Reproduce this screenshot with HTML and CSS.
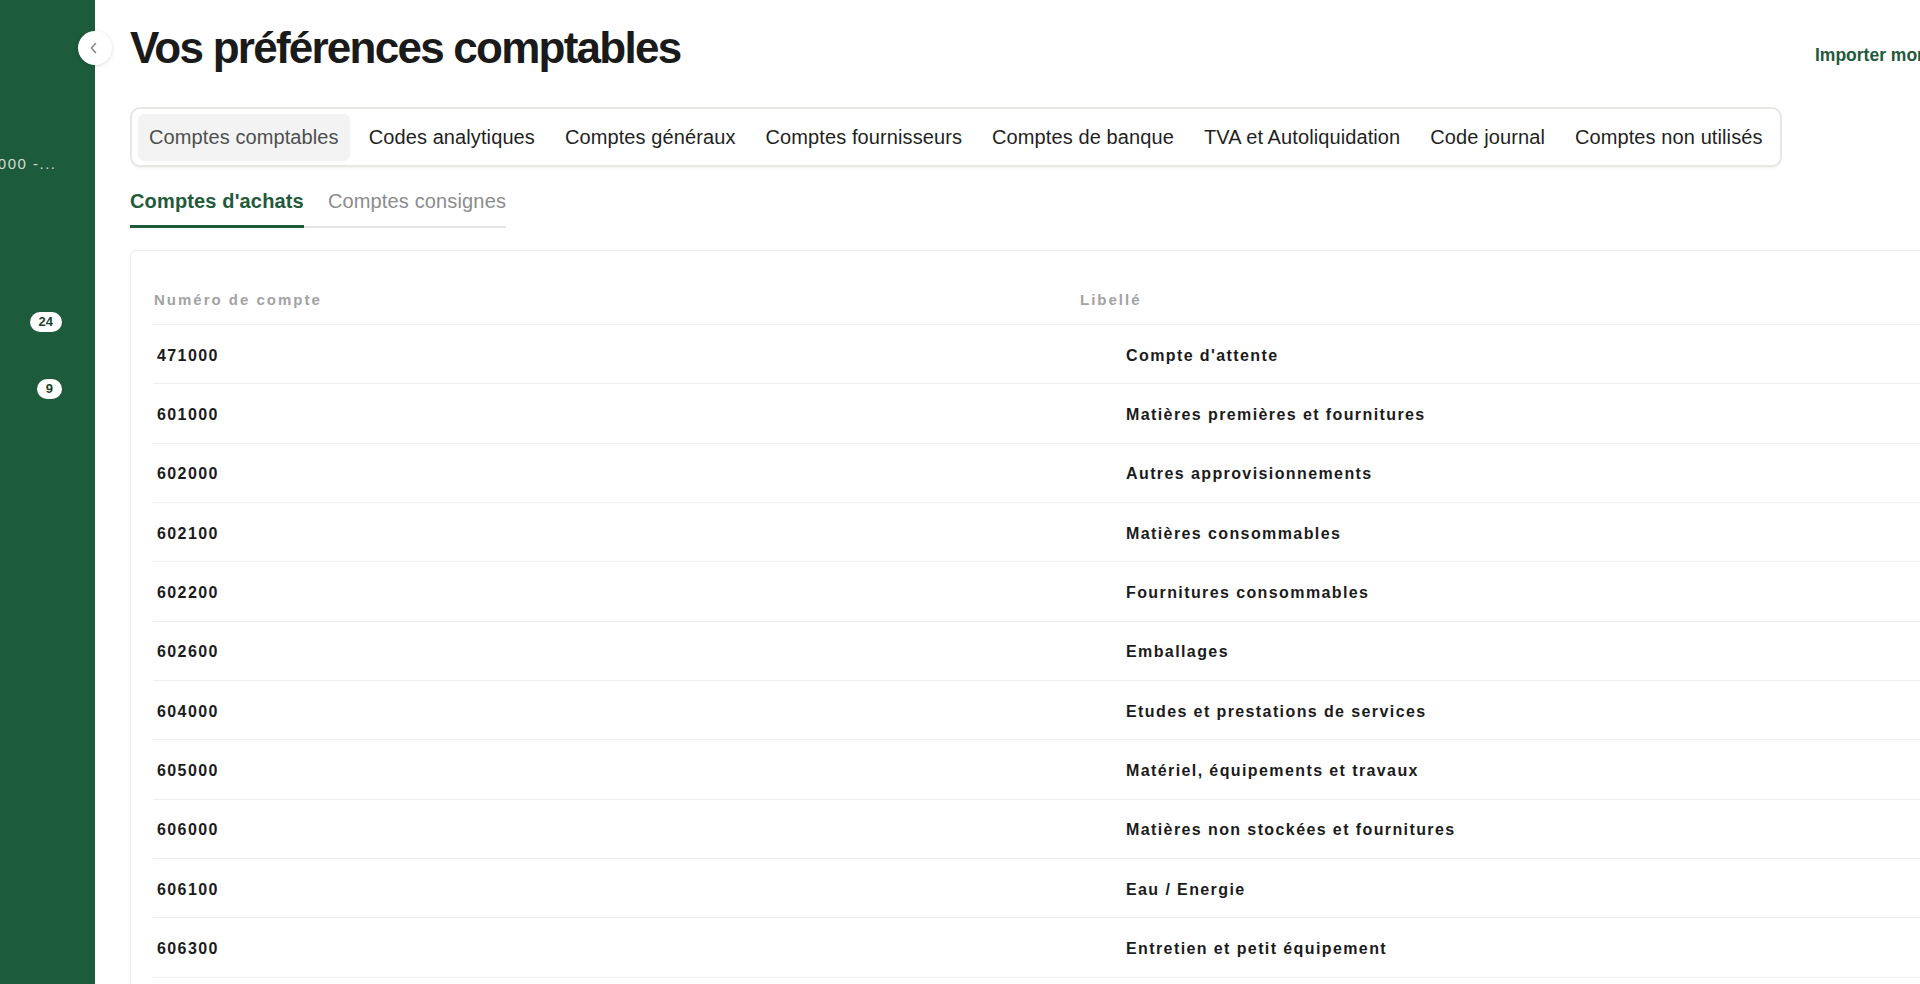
FILE: index.html
```html
<!DOCTYPE html>
<html lang="fr">
<head>
<meta charset="utf-8">
<title>Vos préférences comptables</title>
<link rel="stylesheet" href="styles.css">
</head>
<body>
<aside class="sidebar">
  <div class="sidebar-company">2000 -...</div>
  <span class="badge badge-first">24</span>
  <span class="badge badge-second">9</span>
</aside>
<button class="collapse-btn" aria-label="Réduire">
  <svg width="10" height="12" viewBox="0 0 10 12"><path d="M6.5 1.5 L2.5 6 L6.5 10.5" fill="none" stroke="#8a8a8a" stroke-width="1.6" stroke-linecap="round" stroke-linejoin="round"/></svg>
</button>
<main class="main">
  <div class="content">
    <header class="page-header">
      <h1 class="page-title">Vos préférences comptables</h1>
      <a class="import-link">Importer mon plan comptable</a>
    </header>
    <nav class="tabbar">
      <span class="tab tab-active">Comptes comptables</span>
      <span class="tab">Codes analytiques</span>
      <span class="tab">Comptes généraux</span>
      <span class="tab">Comptes fournisseurs</span>
      <span class="tab">Comptes de banque</span>
      <span class="tab">TVA et Autoliquidation</span>
      <span class="tab">Code journal</span>
      <span class="tab">Comptes non utilisés</span>
    </nav>
    <div class="subtabs-wrap">
      <nav class="subtabs">
        <span class="subtab subtab-active">Comptes d'achats</span>
        <span class="subtab">Comptes consignes</span>
      </nav>
    </div>
    <section class="card">
      <div class="table">
        <div class="row row-head">
          <div class="cell-num">Numéro de compte</div>
          <div class="cell-label">Libellé</div>
        </div>
        <div class="row"><div class="cell-num">471000</div><div class="cell-label">Compte d'attente</div></div>
        <div class="row"><div class="cell-num">601000</div><div class="cell-label">Matières premières et fournitures</div></div>
        <div class="row"><div class="cell-num">602000</div><div class="cell-label">Autres approvisionnements</div></div>
        <div class="row"><div class="cell-num">602100</div><div class="cell-label">Matières consommables</div></div>
        <div class="row"><div class="cell-num">602200</div><div class="cell-label">Fournitures consommables</div></div>
        <div class="row"><div class="cell-num">602600</div><div class="cell-label">Emballages</div></div>
        <div class="row"><div class="cell-num">604000</div><div class="cell-label">Etudes et prestations de services</div></div>
        <div class="row"><div class="cell-num">605000</div><div class="cell-label">Matériel, équipements et travaux</div></div>
        <div class="row"><div class="cell-num">606000</div><div class="cell-label">Matières non stockées et fournitures</div></div>
        <div class="row"><div class="cell-num">606100</div><div class="cell-label">Eau / Energie</div></div>
        <div class="row"><div class="cell-num">606300</div><div class="cell-label">Entretien et petit équipement</div></div>
        <div class="row"><div class="cell-num">606400</div><div class="cell-label">Fournitures administratives</div></div>
      </div>
    </section>
  </div>
</main>
</body>
</html>
```

FILE: styles.css
```css
* { box-sizing: border-box; }

html, body {
  margin: 0;
  height: 984px;
  overflow: hidden;
}

body {
  display: flex;
  background: #ffffff;
  font-family: "Liberation Sans", Arial, sans-serif;
  color: #1c1c1c;
  position: relative;
}

/* Sidebar */
.sidebar {
  flex: 0 0 95px;
  width: 95px;
  height: 984px;
  background: #1d5b3d;
  display: flex;
  flex-direction: column;
  align-items: flex-end;
  padding-top: 154px;
  overflow: hidden;
}

.sidebar-company {
  align-self: flex-start;
  margin-left: -12px;
  font-size: 15px;
  line-height: 20px;
  letter-spacing: 1.5px;
  color: #d3dcd7;
  white-space: nowrap;
}

.badge {
  margin-right: 33px;
  height: 20px;
  padding: 0 9px;
  border-radius: 10px;
  background: #ffffff;
  color: #1d3f2f;
  font-weight: 700;
  font-size: 13px;
  line-height: 20px;
}

.badge-first { margin-top: 138px; }
.badge-second { margin-top: 47px; }

.collapse-btn {
  position: absolute;
  left: 78px;
  top: 31px;
  width: 34px;
  height: 34px;
  border: none;
  border-radius: 50%;
  background: #ffffff;
  box-shadow: 0 1px 4px rgba(0, 0, 0, 0.14);
  display: flex;
  align-items: center;
  justify-content: center;
  padding: 0 3px 0 0;
}

/* Main */
.main {
  flex: 1 1 auto;
  min-width: 0;
  padding: 22px 0 0 35px;
}

.content {
  width: 1931px;
}

.page-header {
  display: flex;
  justify-content: space-between;
  align-items: flex-start;
}

.page-title {
  margin: 0;
  font-size: 44px;
  line-height: 52px;
  font-weight: 700;
  letter-spacing: -1.75px;
  color: #1a1a1a;
}

.import-link {
  margin-top: 23px;
  font-size: 17.5px;
  line-height: 20px;
  font-weight: 700;
  color: #1f5a3b;
  white-space: nowrap;
}

/* Primary tabs */
.tabbar {
  margin-top: 33px;
  display: inline-flex;
  gap: 8px;
  padding: 5px 6px 4px 6px;
  border: 2px solid #e7e7e4;
  border-radius: 10px;
  box-shadow: 0 1px 2px rgba(0, 0, 0, 0.06);
  background: #ffffff;
}

.tab {
  padding: 12px 11px;
  font-size: 20px;
  line-height: 23px;
  letter-spacing: 0.1px;
  color: #1f1f1f;
  border-radius: 6px;
  white-space: nowrap;
}

.tab-active {
  background: #f2f3f2;
  color: #4f4f4f;
}

/* Sub tabs */
.subtabs-wrap {
  margin-top: 23px;
}

.subtabs {
  display: inline-flex;
  gap: 24px;
  border-bottom: 2px solid #e4e4e2;
}

.subtab {
  font-size: 20px;
  line-height: 23px;
  letter-spacing: 0.15px;
  padding-bottom: 12px;
  border-bottom: 3px solid transparent;
  margin-bottom: -2px;
  color: #8c8c8c;
  white-space: nowrap;
}

.subtab-active {
  font-weight: 700;
  color: #1f5a3b;
  border-bottom-color: #1f5a3b;
}

/* Card & table */
.card {
  margin-top: 22px;
  background: #ffffff;
  border: 1px solid #ececec;
  border-radius: 6px;
  box-shadow: 0 0 4px rgba(0, 0, 0, 0.05);
  padding: 23px 0 0 22px;
}

.table {
  display: flex;
  flex-direction: column;
  margin-right: 24px;
}

.row {
  display: flex;
  align-items: center;
  height: 59.33px;
  padding-top: 3px;
  border-bottom: 1px solid #eeeeee;
  font-size: 16px;
  font-weight: 700;
  letter-spacing: 1.4px;
  color: #1b1b1b;
}

.row .cell-num {
  flex: 0 0 926px;
  padding-left: 4px;
}

.row .cell-label {
  padding-left: 47px;
}

.row-head {
  height: 51px;
  padding-top: 1px;
  font-size: 15px;
  letter-spacing: 2px;
  color: #a3a3a3;
}

.row-head .cell-num { padding-left: 1px; }
.row-head .cell-label { padding-left: 1px; }
```
